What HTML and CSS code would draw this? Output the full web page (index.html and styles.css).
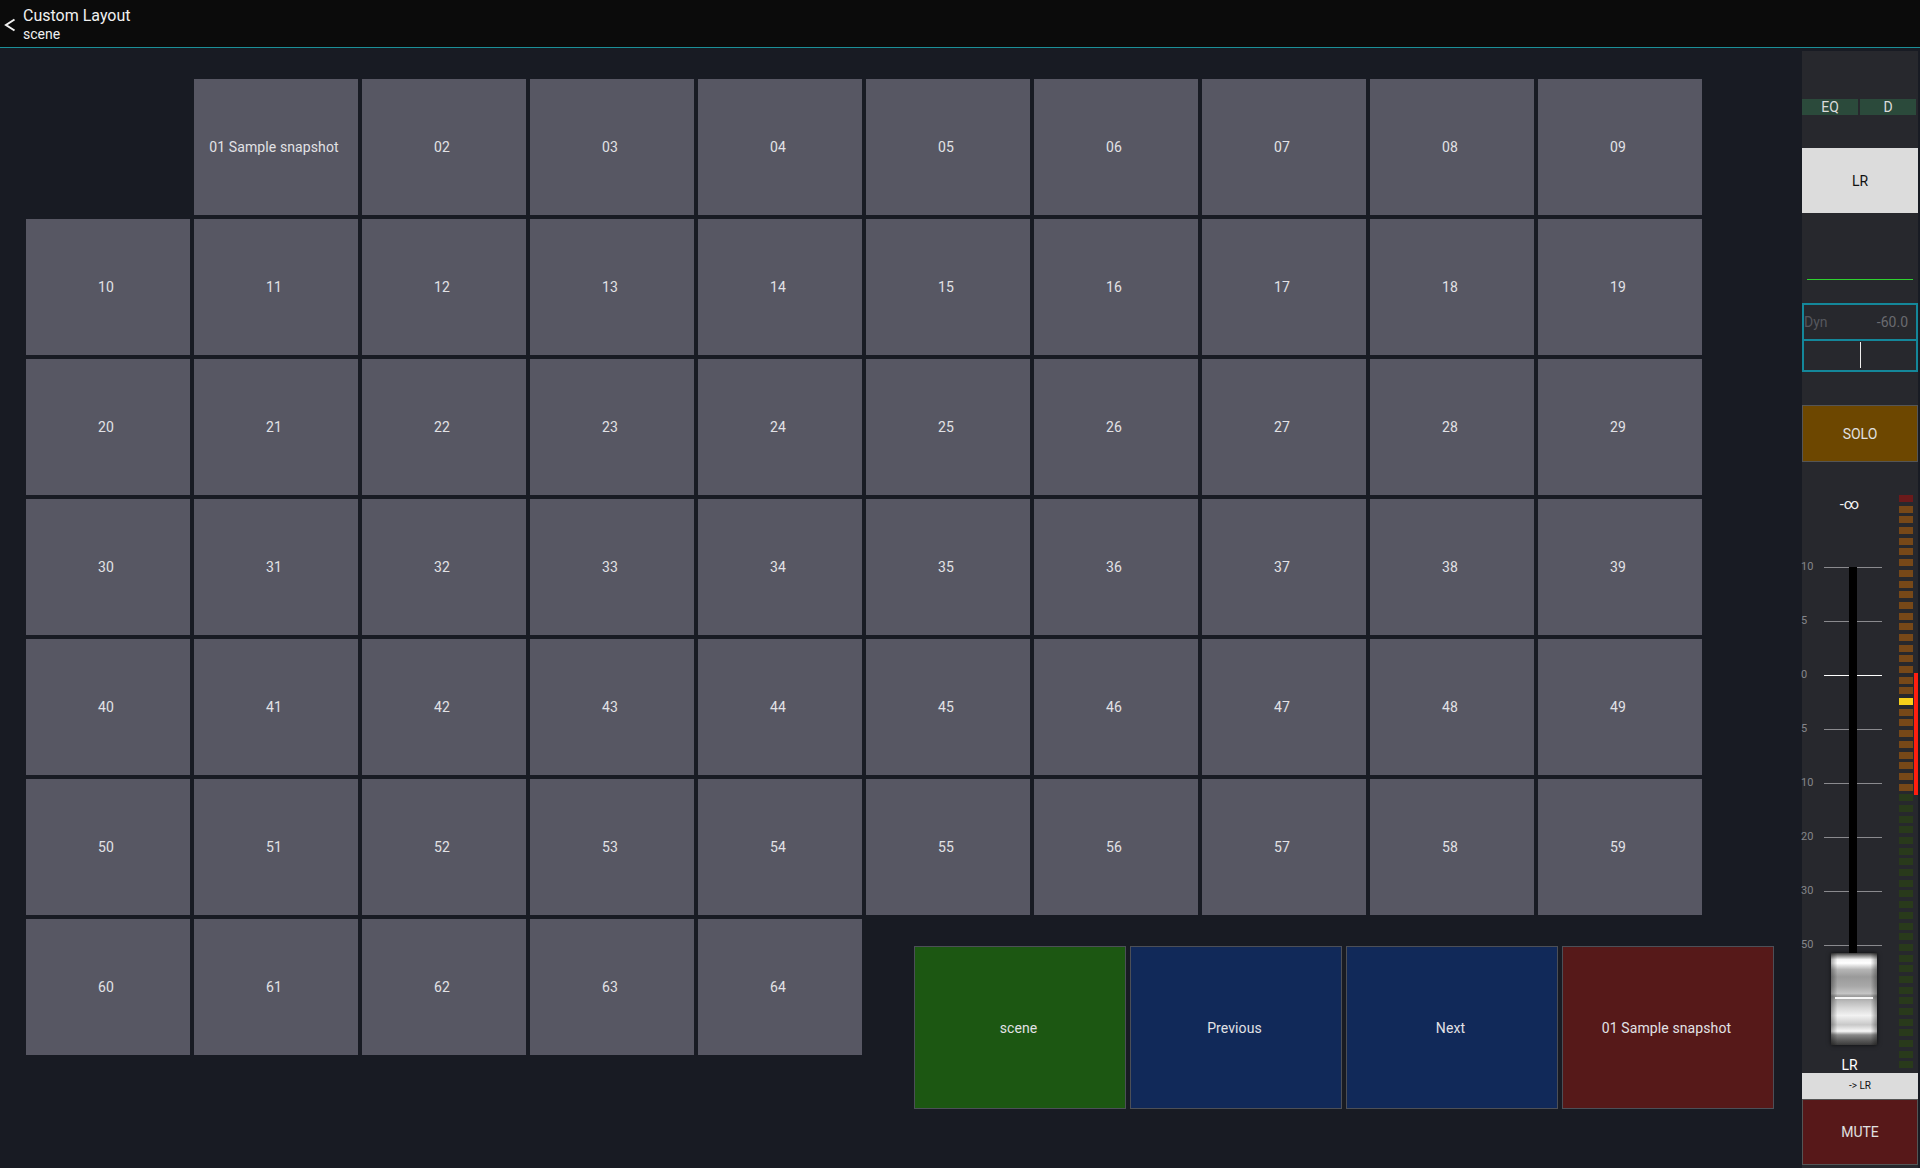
FILE: index.html
```html
<!DOCTYPE html>
<html>
<head>
<meta charset="utf-8">
<link rel="stylesheet" href="styles.css">
</head>
<body>
<header class="topbar">
  <svg class="back" viewBox="0 0 12 14" width="12" height="14"><polyline points="10.5,1.5 2,7 10.5,12.5" fill="none" stroke="#f2f2f2" stroke-width="2"/></svg>
  <div class="titles">
    <div class="title">Custom Layout</div>
    <div class="subtitle">scene</div>
  </div>
</header>
<div class="main">
  <main class="canvas">
    <div class="grid">
      <div class="cell blank"></div>
      <div class="cell">01 Sample snapshot</div>
      <div class="cell">02</div><div class="cell">03</div><div class="cell">04</div><div class="cell">05</div><div class="cell">06</div><div class="cell">07</div><div class="cell">08</div><div class="cell">09</div>
      <div class="cell">10</div><div class="cell">11</div><div class="cell">12</div><div class="cell">13</div><div class="cell">14</div><div class="cell">15</div><div class="cell">16</div><div class="cell">17</div><div class="cell">18</div><div class="cell">19</div>
      <div class="cell">20</div><div class="cell">21</div><div class="cell">22</div><div class="cell">23</div><div class="cell">24</div><div class="cell">25</div><div class="cell">26</div><div class="cell">27</div><div class="cell">28</div><div class="cell">29</div>
      <div class="cell">30</div><div class="cell">31</div><div class="cell">32</div><div class="cell">33</div><div class="cell">34</div><div class="cell">35</div><div class="cell">36</div><div class="cell">37</div><div class="cell">38</div><div class="cell">39</div>
      <div class="cell">40</div><div class="cell">41</div><div class="cell">42</div><div class="cell">43</div><div class="cell">44</div><div class="cell">45</div><div class="cell">46</div><div class="cell">47</div><div class="cell">48</div><div class="cell">49</div>
      <div class="cell">50</div><div class="cell">51</div><div class="cell">52</div><div class="cell">53</div><div class="cell">54</div><div class="cell">55</div><div class="cell">56</div><div class="cell">57</div><div class="cell">58</div><div class="cell">59</div>
      <div class="cell">60</div><div class="cell">61</div><div class="cell">62</div><div class="cell">63</div><div class="cell">64</div>
      <div class="actions">
        <div class="action green">scene</div>
        <div class="action blue">Previous</div>
        <div class="action blue">Next</div>
        <div class="action red">01 Sample snapshot</div>
      </div>
    </div>
  </main>
  <aside class="strip">
    <div class="eqrow"><div>EQ</div><div>D</div></div>
    <div class="lr">LR</div>
    <div class="gline"></div>
    <div class="dyn">
      <div class="dyn-top"><span class="dyn-l">Dyn</span><span class="dyn-r">-60.0</span></div>
      <div class="dyn-bot"><div class="cursor"></div></div>
    </div>
    <div class="solo">SOLO</div>
    <div class="fader-sec">
      <div class="fader">
        <div class="inf">-∞</div>
        <div class="scale">
          <div class="tick"><span>10</span><i></i></div>
          <div class="tick"><span>5</span><i></i></div>
          <div class="tick zero"><span>0</span><i></i></div>
          <div class="tick"><span>5</span><i></i></div>
          <div class="tick"><span>10</span><i></i></div>
          <div class="tick"><span>20</span><i></i></div>
          <div class="tick"><span>30</span><i></i></div>
          <div class="tick"><span>50</span><i></i></div>
          <div class="track"></div>
          <div class="cap"></div>
        </div>
        <div class="lrlabel">LR</div>
      </div>
      <div class="meter">
        <div class="seg r"></div>
        <div class="seg b"></div><div class="seg b"></div><div class="seg b"></div><div class="seg b"></div><div class="seg b"></div><div class="seg b"></div>
        <div class="seg b"></div><div class="seg b"></div><div class="seg b"></div><div class="seg b"></div><div class="seg b"></div><div class="seg b"></div>
        <div class="seg b"></div><div class="seg b"></div><div class="seg b"></div><div class="seg b"></div><div class="seg b"></div><div class="seg b"></div>
        <div class="seg y"></div>
        <div class="seg b"></div><div class="seg b"></div><div class="seg b"></div><div class="seg b"></div><div class="seg b"></div><div class="seg b"></div><div class="seg b"></div><div class="seg b"></div>
        <div class="seg g"></div><div class="seg g"></div><div class="seg g"></div><div class="seg g"></div><div class="seg g"></div><div class="seg g"></div><div class="seg g"></div><div class="seg g"></div><div class="seg g"></div><div class="seg g"></div><div class="seg g"></div><div class="seg g"></div><div class="seg g"></div>
        <div class="seg g"></div><div class="seg g"></div><div class="seg g"></div><div class="seg g"></div><div class="seg g"></div><div class="seg g"></div><div class="seg g"></div><div class="seg g"></div><div class="seg g"></div><div class="seg g"></div><div class="seg g"></div><div class="seg g"></div><div class="seg g"></div>
      </div>
      <div class="peak"></div>
    </div>
    <div class="route">-&gt; LR</div>
    <div class="mute">MUTE</div>
  </aside>
</div>
</body>
</html>
```

FILE: styles.css
```css
* { box-sizing: border-box; }

body {
  margin: 0;
  width: 1920px;
  height: 1168px;
  overflow: hidden;
  background: #181b23;
  font-family: Roboto, "Liberation Sans", sans-serif;
  color: #e2e2e2;
}

.topbar {
  height: 48px;
  background: #0b0b0b;
  border-bottom: 1px solid #1b8f98;
  display: flex;
}

.back {
  margin: 18px 7px 0 4px;
  flex: none;
}

.titles { padding-top: 7px; color: #f0f0f0; }
.title { font-size: 16px; line-height: 18px; }
.subtitle { font-size: 14px; line-height: 15px; margin-top: 2px; }

.main {
  display: flex;
  height: 1120px;
}

.canvas {
  flex: 1;
  padding: 31px 0 0 26px;
}

.grid {
  display: grid;
  grid-template-columns: repeat(10, 164px);
  grid-template-rows: repeat(7, 136px);
  gap: 4px;
}

.cell {
  background: #575763;
  display: flex;
  align-items: center;
  justify-content: center;
  padding-right: 4px;
  font-size: 14px;
  letter-spacing: 0.1px;
  color: #e2e2e6;
}

.cell.blank { background: transparent; }

.actions {
  grid-row: 7;
  grid-column: 6 / 11;
  align-self: start;
  margin: 27px -72px 0 48px;
  height: 163px;
  display: flex;
  gap: 4px;
}

.action {
  flex: 1;
  border: 1px solid #4c4f57;
  display: flex;
  align-items: center;
  justify-content: center;
  padding-right: 3px;
  font-size: 14px;
  letter-spacing: 0.1px;
  color: #e2e2e6;
}

.action.green { background: #1c5712; }
.action.blue { background: #112959; }
.action.red { background: #561919; }

/* channel strip */
.strip {
  width: 116px;
  height: 1117px;
  margin: 3px 2px 0 0;
  background: #27282d;
  display: flex;
  flex-direction: column;
  padding-top: 48px;
}

.eqrow {
  display: flex;
  gap: 2px;
  height: 16px;
}

.eqrow div {
  width: 56px;
  background: #2b4a3b;
  text-align: center;
  font-size: 14px;
  line-height: 16px;
  color: #dcdcdc;
}

.lr {
  margin-top: 33px;
  height: 65px;
  background: #dcdcdc;
  color: #111;
  display: flex;
  align-items: center;
  justify-content: center;
  font-size: 14px;
}

.gline {
  margin: 66px 5px 0;
  height: 1px;
  background: #2fd12f;
}

.dyn {
  margin-top: 23px;
  border: 2px solid #14879a;
}

.dyn-top {
  height: 34px;
  display: flex;
  justify-content: space-between;
  align-items: center;
  padding-right: 8px;
  font-size: 14px;
}

.dyn-l { color: #55575d; }
.dyn-r { color: #6a6b70; }

.dyn-bot {
  height: 31px;
  border-top: 2px solid #14879a;
  display: flex;
  justify-content: center;
}

.cursor {
  width: 1px;
  height: 26px;
  margin-top: 1px;
  background: #eee;
}

.solo {
  margin-top: 33px;
  height: 57px;
  background: #6d4700;
  border: 1px solid #555;
  display: flex;
  align-items: center;
  justify-content: center;
  font-size: 14px;
  color: #e0e0e0;
}

.fader-sec {
  height: 611px;
  display: flex;
}

.fader {
  width: 95px;
  display: flex;
  flex-direction: column;
}

.inf {
  height: 79px;
  padding-top: 32px;
  text-align: center;
  line-height: 20px;
  font-size: 15px;
  color: #f2f2f2;
}

.scale {
  position: relative;
  height: 432px;
  display: flex;
  flex-direction: column;
}

.tick {
  height: 54px;
  display: flex;
  align-items: center;
}

.tick span {
  width: 23px;
  margin-left: -1px;
  font-size: 11px;
  line-height: 12px;
  color: #85868a;
}

.tick i {
  width: 58px;
  height: 1px;
  margin-top: 1px;
  background: #8a8a8e;
}

.tick.zero i { background: #fff; }

.track {
  position: absolute;
  left: 47px;
  top: 27px;
  width: 8px;
  height: 387px;
  background: #000;
}

.cap {
  position: absolute;
  left: 29px;
  top: 413px;
  width: 46px;
  height: 92px;
  box-shadow: 0 0 4px rgba(0, 0, 0, 0.7);
  background:
    linear-gradient(to right, rgba(0,0,0,0.35) 0, rgba(0,0,0,0) 14%, rgba(0,0,0,0) 86%, rgba(0,0,0,0.35) 100%),
    linear-gradient(to bottom, #3a3a3a 0%, #8a8a8a 3%, #f4f4f4 7%, #ffffff 11%, #b5b5b5 18%, #9a9a9a 26%, #a8a8a8 36%, #c4c4c4 44%, #9a9a9a 47%, #b8b8b8 52%, #d8d8d8 60%, #f2f2f2 68%, #c8c8c8 78%, #f8f8f8 85%, #8a8a8a 89%, #5a5a5a 95%, #3a3a3a 100%);
}

.cap::after {
  content: "";
  position: absolute;
  left: 4px;
  right: 4px;
  top: 44px;
  height: 2px;
  background: #f6f6f6;
}

.lrlabel {
  margin-top: 85px;
  text-align: center;
  font-size: 14px;
  line-height: 16px;
  color: #fff;
}

.meter {
  width: 14px;
  height: 574px;
  margin: 33px 0 0 2px;
  display: flex;
  flex-direction: column;
  justify-content: space-between;
}

.seg { height: 7px; }
.seg.r { background: #6b1a1b; }
.seg.b { background: #774818; }
.seg.y { background: #f7d01a; }
.seg.g { background: #293a1b; }

.peak {
  width: 4px;
  height: 122px;
  margin: 211px 0 0 1px;
  background: #ff1e10;
}

.route {
  height: 26px;
  background: #dcdcdc;
  color: #111;
  font-size: 10px;
  line-height: 26px;
  text-align: center;
}

.mute {
  height: 66px;
  background: #571819;
  border: 1px solid #555;
  display: flex;
  align-items: center;
  justify-content: center;
  font-size: 14px;
  color: #e0e0e0;
}
```
